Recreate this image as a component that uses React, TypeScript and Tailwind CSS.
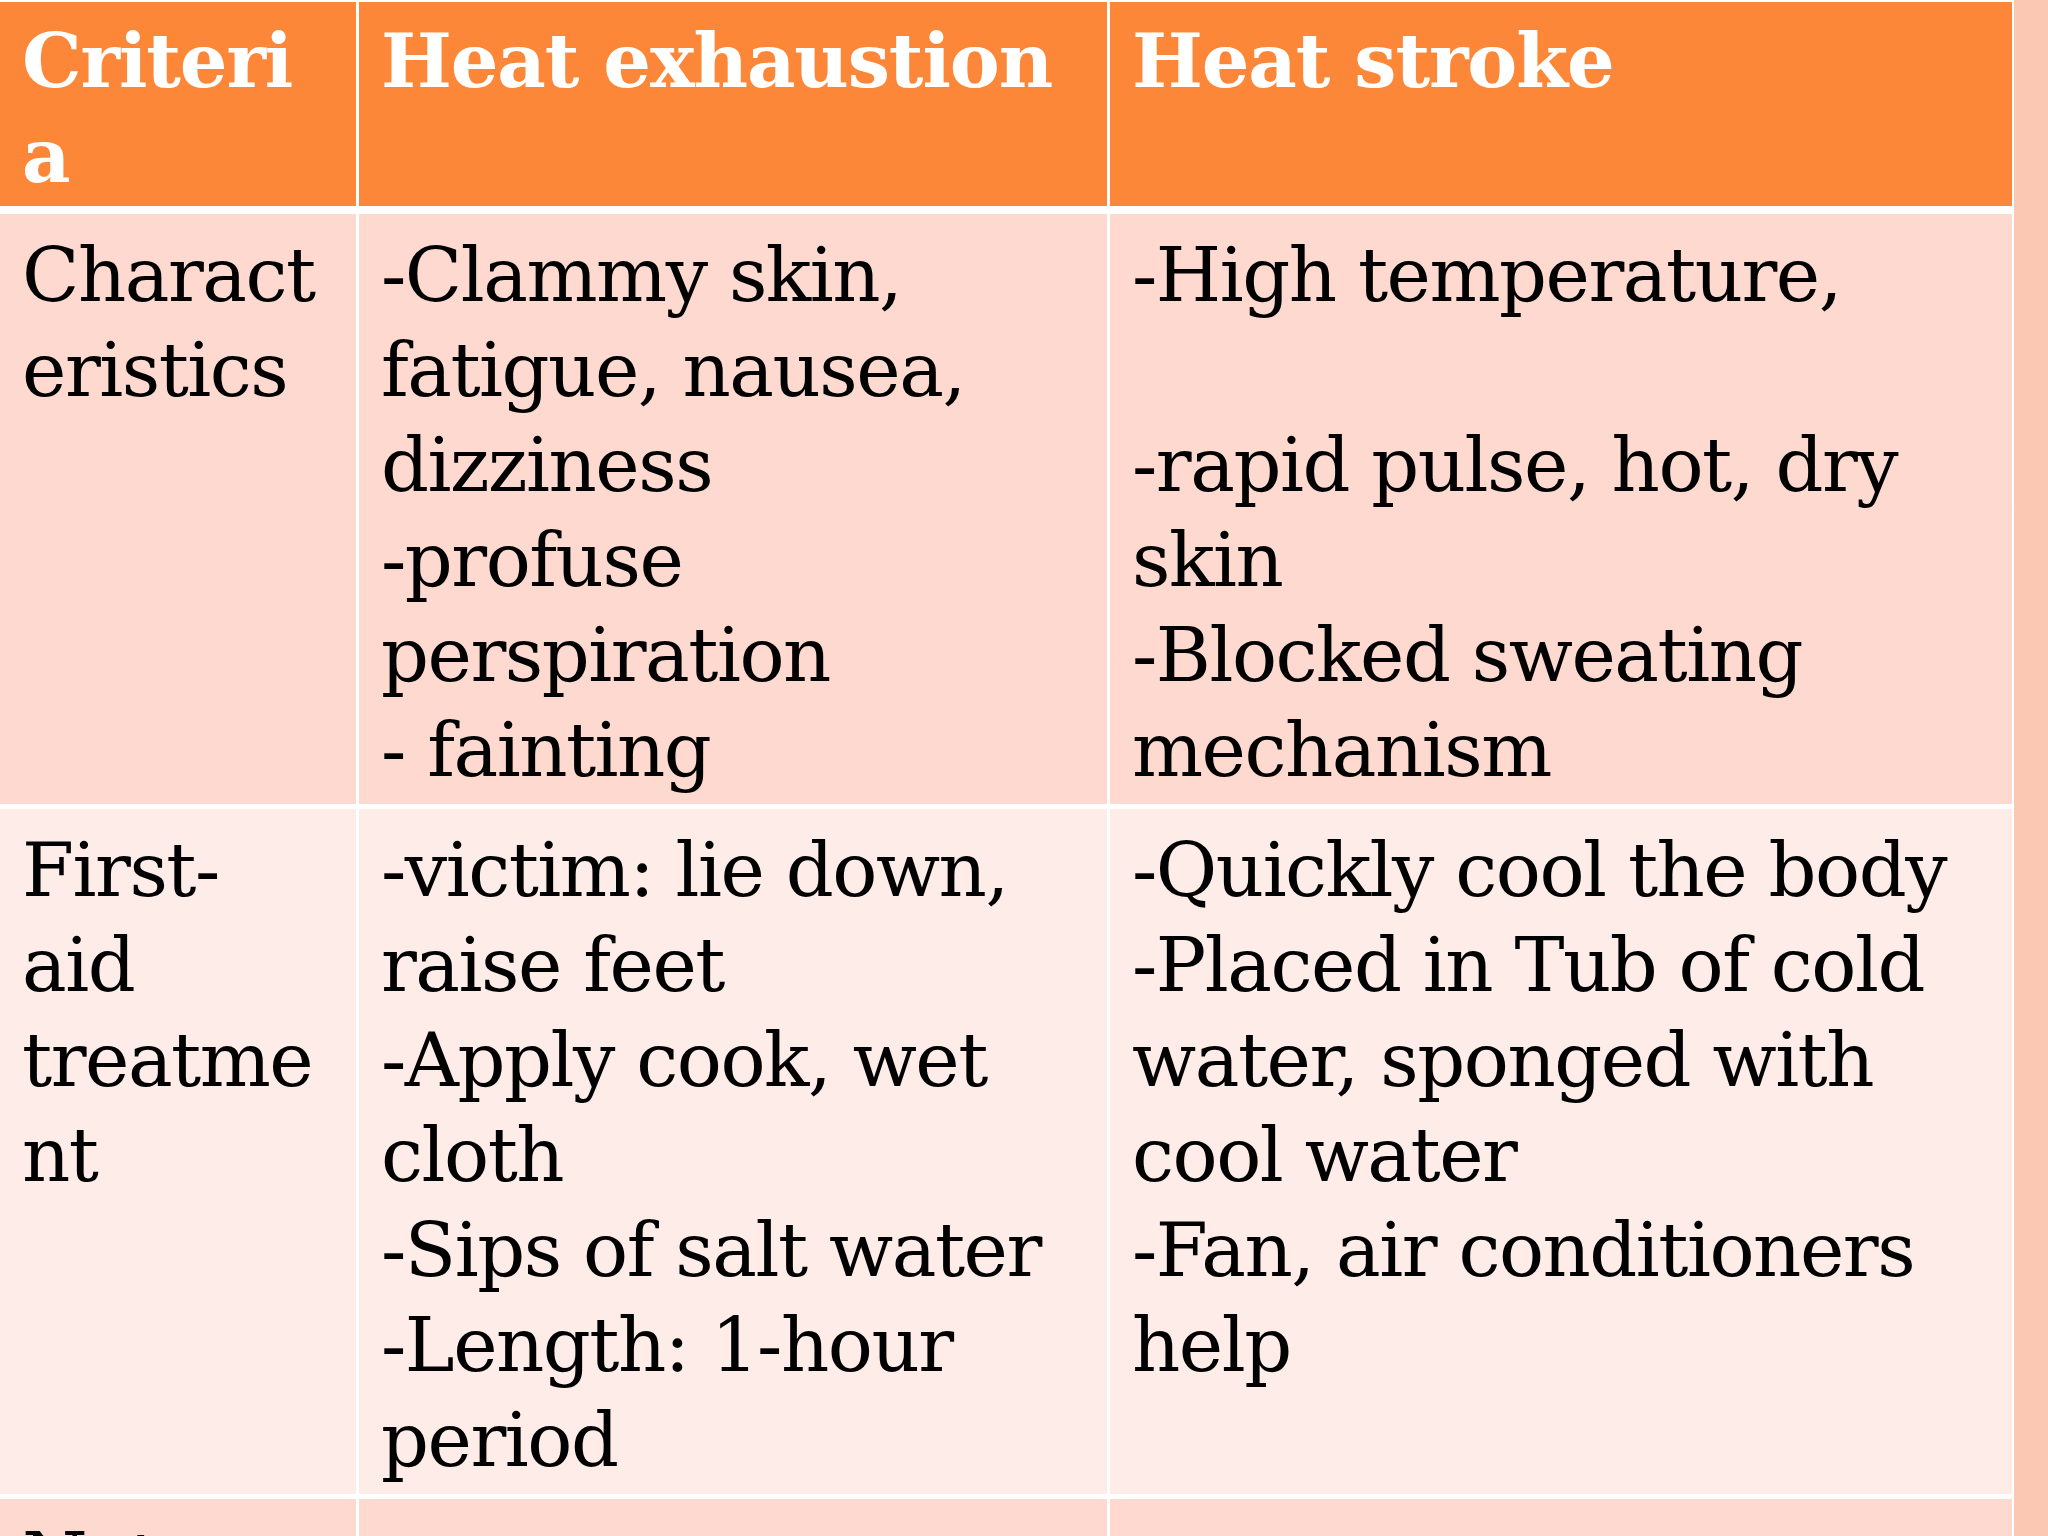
const header = [['Criteri', 'a'], ['Heat exhaustion'], ['Heat stroke']];

const rows: { bg: string; cells: string[][] }[] = [
  {
    bg: 'bg-[#fdd9cf]',
    cells: [
      ['Charact', 'eristics'],
      ['-Clammy skin,', 'fatigue, nausea,', 'dizziness', '-profuse', 'perspiration', '- fainting'],
      ['-High temperature,', '', '-rapid pulse, hot, dry', 'skin', '-Blocked sweating', 'mechanism'],
    ],
  },
  {
    bg: 'bg-[#fdece8]',
    cells: [
      ['First-', 'aid', 'treatme', 'nt'],
      ['-victim: lie down,', 'raise feet', '-Apply cook, wet', 'cloth', '-Sips of salt water', '-Length: 1-hour', 'period'],
      ['-Quickly cool the body', '-Placed in Tub of cold', 'water, sponged with', 'cool water', '-Fan, air conditioners', 'help'],
    ],
  },
  {
    bg: 'bg-[#fdd9cf]',
    cells: [['Nature'], [], []],
  },
];

function Lines({ lines }: { lines: string[] }) {
  return (
    <>
      {lines.map((line, i) => (
        <div key={i} className="h-[95px] whitespace-pre">
          {line || ' '}
        </div>
      ))}
    </>
  );
}

export default function App() {
  return (
    <div className="flex h-[1536px] w-[2048px] overflow-hidden bg-gradient-to-r from-[#fccdba] to-[#fbc8b3] font-['DejaVu_Serif',serif]">
      <div className="grid h-fit grid-cols-[356px_748px_902px] gap-x-[3px] border-r-2 border-t-2 border-white bg-white">
        {header.map((cell, i) => (
          <div
            key={i}
            className="h-[204px] bg-[#fd8739] pl-[22px] pt-[12px] text-[75px] leading-[95px] font-bold tracking-[-0.015em] text-white"
          >
            <Lines lines={cell} />
          </div>
        ))}
        <div className="col-span-3 h-[8px]" />
        {rows.map((row, r) => (
          <div key={r} className="contents">
            {row.cells.map((cell, c) => (
              <div
                key={c}
                className={`${row.bg} pl-[22px] pt-[14px] ${r === 2 ? 'h-[200px]' : 'pb-[6px]'} text-[75px] leading-[95px] tracking-[-0.02em] text-black`}
              >
                <Lines lines={cell} />
              </div>
            ))}
            {r < 2 && <div className="col-span-3 h-[5px]" />}
          </div>
        ))}
      </div>
    </div>
  );
}
